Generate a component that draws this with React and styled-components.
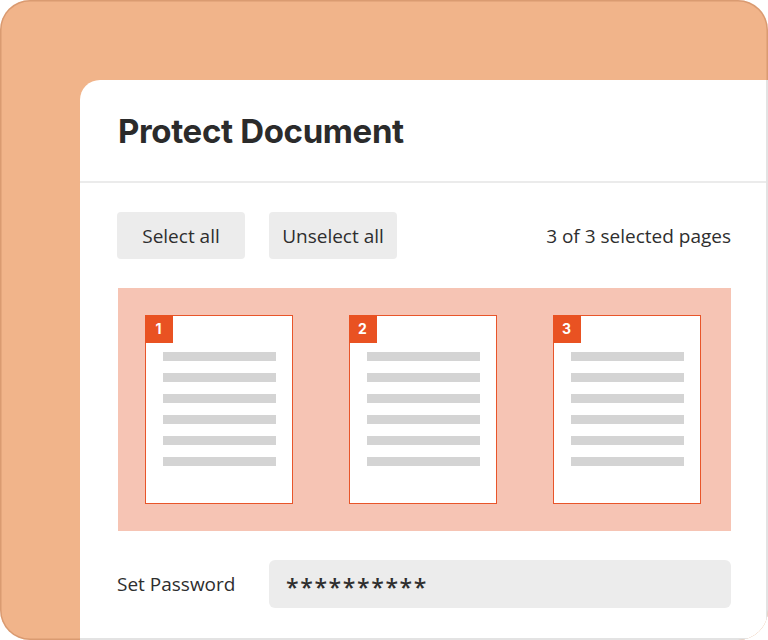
import React from "react";
import styled, { createGlobalStyle } from "styled-components";

const Global = createGlobalStyle`
  html, body { margin: 0; padding: 0; background: #ffffff; }
  body { font-family: "Open Sans", "Liberation Sans", sans-serif; }
  * { box-sizing: border-box; }
`;

const Frame = styled.div`
  width: 768px;
  height: 640px;
  background: #f1b48a;
  border-radius: 30px;
  overflow: hidden;
  box-shadow: inset 0 0 0 1.5px rgba(150, 80, 40, 0.25);
  display: flex;
  flex-direction: column;
  padding: 80px 0 0 80px;
`;

const Card = styled.div`
  flex: 1;
  background: #ffffff;
  border-top-left-radius: 20px;
  border-right: 2px solid #e3e3e3;
  border-bottom: 2px solid #e3e3e3;
  display: flex;
  flex-direction: column;
`;

const Header = styled.div`
  height: 103px;
  display: flex;
  align-items: center;
  padding-left: 38px;
  border-bottom: 2px solid #ebebeb;
`;

const Title = styled.h1`
  margin: 0;
  font-family: Inter, "Liberation Sans", sans-serif;
  font-weight: 700;
  font-size: 33px;
  letter-spacing: -0.35px;
  color: #2b2b2b;
`;

const Body = styled.div`
  padding: 29px 35px 0 37px;
  display: flex;
  flex-direction: column;
  gap: 29px;
`;

const Toolbar = styled.div`
  display: flex;
  align-items: center;
  gap: 24px;
`;

const Button = styled.button`
  width: 128px;
  height: 47px;
  border: none;
  border-radius: 4px;
  background: #ececec;
  font-family: "Open Sans", sans-serif;
  font-size: 19px;
  color: #2e2e2e;
  padding: 0;
`;

const Count = styled.div`
  margin-left: auto;
  font-size: 19px;
  color: #2e2e2e;
`;

const Pages = styled.div`
  margin-left: 1px;
  height: 243px;
  background: #f6c4b4;
  display: flex;
  gap: 56px;
  padding: 27px 30px 27px 27px;
`;

const Page = styled.div`
  position: relative;
  width: 148px;
  height: 189px;
  background: #ffffff;
  border: 1.5px solid #e8552a;
  padding: 36px 16px 0 17px;
  display: flex;
  flex-direction: column;
  gap: 12px;
`;

const Badge = styled.div`
  position: absolute;
  left: -1.5px;
  top: -1.5px;
  width: 28px;
  height: 28px;
  background: #e95222;
  color: #ffffff;
  font-family: Inter, sans-serif;
  font-weight: 700;
  font-size: 14px;
  display: flex;
  align-items: center;
  justify-content: center;
`;

const Line = styled.div`
  height: 9px;
  background: #d4d4d4;
`;

const PasswordRow = styled.div`
  display: flex;
  align-items: center;
`;

const Label = styled.div`
  width: 152px;
  font-size: 19px;
  color: #2e2e2e;
`;

const Input = styled.div`
  flex: 1;
  height: 48px;
  border-radius: 6px;
  background: #ececec;
  display: flex;
  align-items: center;
  padding-left: 17px;
  padding-top: 6px;
  font-size: 23px;
  font-weight: 600;
  letter-spacing: 1.6px;
  color: #2e2e2e;
`;

export default function App() {
  return (
    <>
      <Global />
      <Frame>
        <Card>
          <Header>
            <Title>Protect Document</Title>
          </Header>
          <Body>
            <Toolbar>
              <Button>Select all</Button>
              <Button>Unselect all</Button>
              <Count>3 of 3 selected pages</Count>
            </Toolbar>
            <Pages>
              {[1, 2, 3].map((n) => (
                <Page key={n}>
                  <Badge>{n}</Badge>
                  {Array.from({ length: 6 }).map((_, i) => (
                    <Line key={i} />
                  ))}
                </Page>
              ))}
            </Pages>
            <PasswordRow>
              <Label>Set Password</Label>
              <Input>**********</Input>
            </PasswordRow>
          </Body>
        </Card>
      </Frame>
    </>
  );
}
